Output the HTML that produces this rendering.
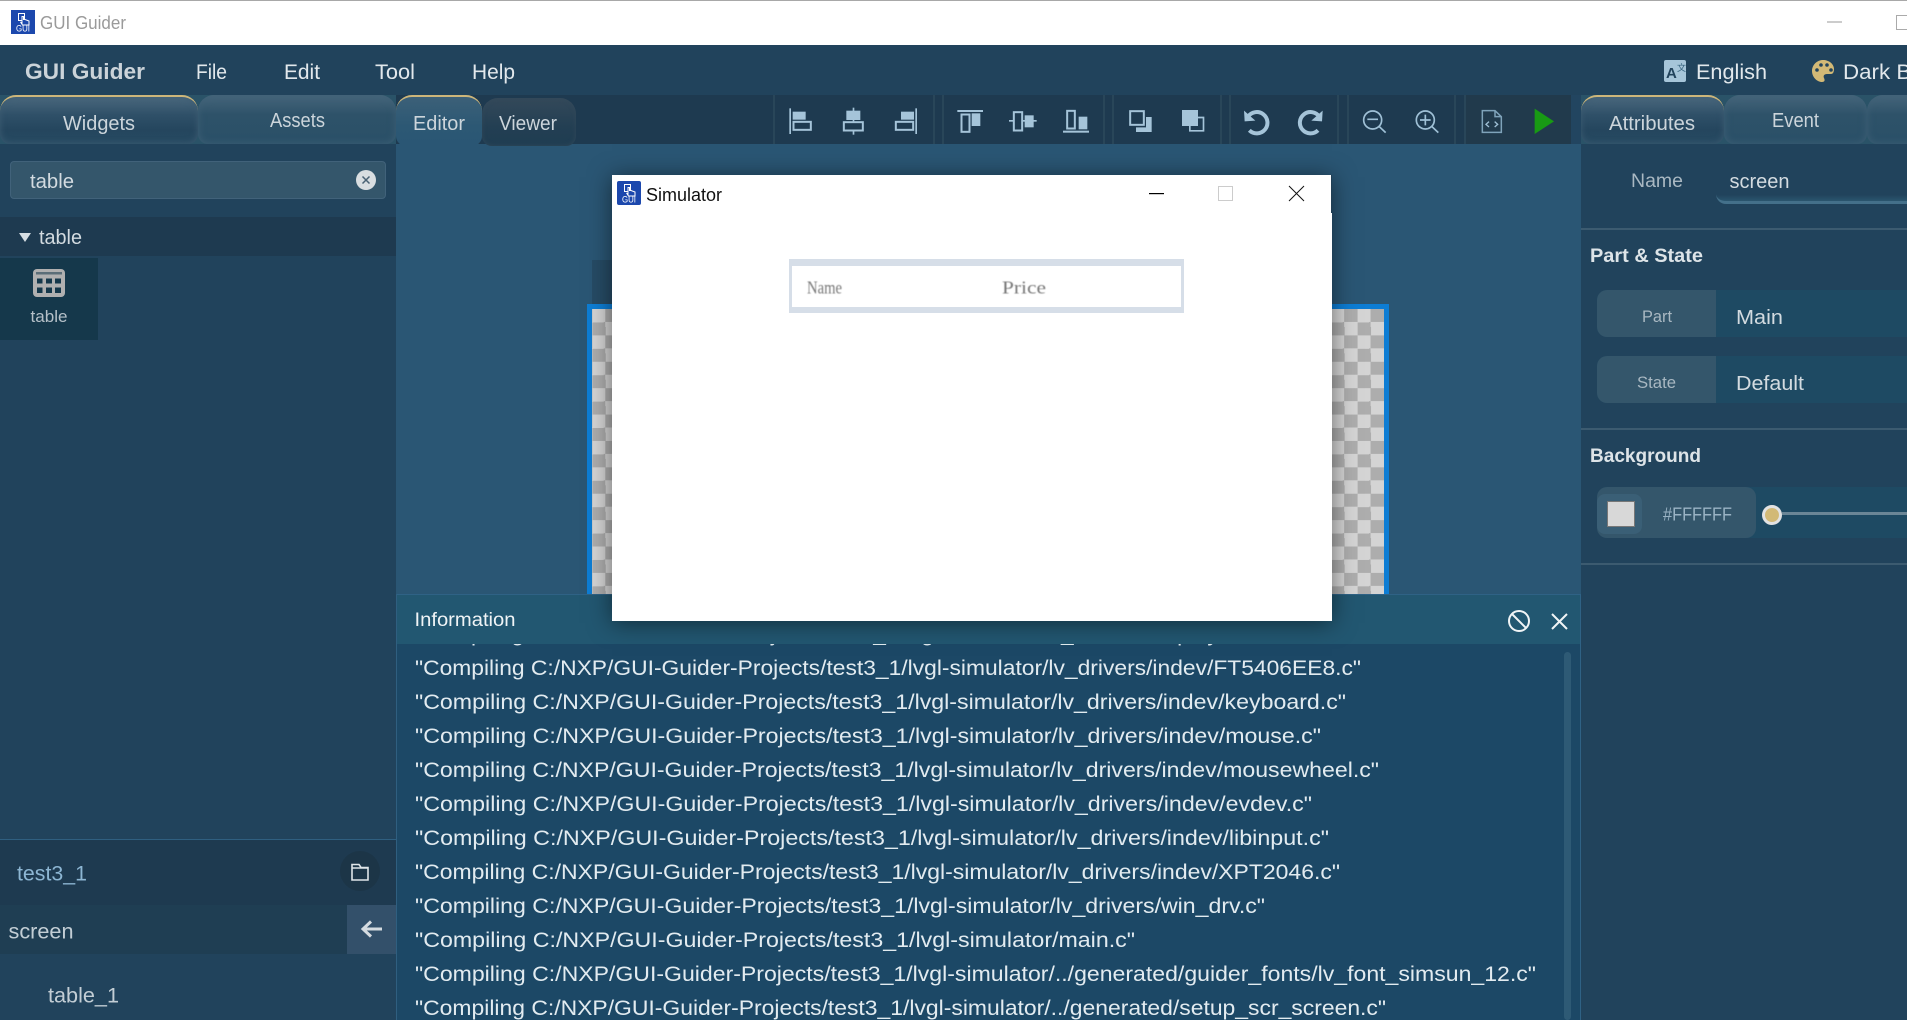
<!DOCTYPE html>
<html lang="en">
<head>
<meta charset="utf-8">
<title>GUI Guider</title>
<style>
html,body{margin:0;padding:0;width:1907px;height:1020px;overflow:hidden;background:#21435c}
.b{position:absolute}
svg{position:absolute;left:0;top:0}
text{font-family:"Liberation Sans",sans-serif}
.tab{position:absolute;box-sizing:border-box;border-radius:16px 16px 10px 10px}
.on{border-top:2px solid #cdb67a;background:linear-gradient(#4a687d 0,#2f5068 38%,#25465e 70%,#264a62 100%);box-shadow:inset 0 0 7px #3e5d73}
.off{background:linear-gradient(#46667b 0,#2e5269 40%,#2a5068 100%);box-shadow:inset 0 0 8px #3f6076}
.s{position:absolute;top:95px;width:2px;height:49px;background:#294659}
</style>
</head>
<body>
<!-- title bar -->
<div class="b" style="left:0;top:0;width:1907px;height:45px;background:#fff;border-top:1px solid #a8a8a8;box-sizing:border-box"></div>
<!-- header -->
<div class="b" style="left:0;top:45px;width:1907px;height:50px;background:#21435c"></div>
<!-- left panel -->
<div class="b" style="left:0;top:95px;width:396px;height:49px;background:#2a5368"></div>
<div class="b" style="left:0;top:144px;width:396px;height:876px;background:#21435c"></div>
<!-- canvas -->
<div class="b" style="left:396px;top:144px;width:1185px;height:876px;background:#2a5674"></div>
<div class="b" style="left:592px;top:260px;width:740px;height:50px;background:#264b65"></div>
<div class="b" style="left:587px;top:304px;width:802px;height:295px;background:#0d7dd4"></div>
<div class="b" style="left:592px;top:309px;width:792px;height:290px;background:conic-gradient(#adadad 25%,#d4d4d4 0 50%,#adadad 0 75%,#d4d4d4 0) right top/26.4px 26.4px"></div>
<!-- toolbar -->
<div class="b" style="left:396px;top:95px;width:1175px;height:49px;background:#1e3a50"></div>
<div class="b" style="left:1571px;top:95px;width:10px;height:49px;background:#224560"></div>
<div class="b" style="left:1465px;top:95px;width:106px;height:49px;background:#213a4c"></div>
<div class="s" style="left:773px"></div>
<div class="s" style="left:933px"></div>
<div class="s" style="left:942px"></div>
<div class="s" style="left:1103px"></div>
<div class="s" style="left:1112px"></div>
<div class="s" style="left:1220px"></div>
<div class="s" style="left:1229px"></div>
<div class="s" style="left:1337px"></div>
<div class="s" style="left:1347px"></div>
<div class="s" style="left:1454px"></div>
<div class="s" style="left:1464px"></div>
<!-- tabs -->
<div class="tab on" style="left:0;top:95px;width:198px;height:49px"></div>
<div class="tab off" style="left:198px;top:95px;width:198px;height:49px"></div>
<div class="tab on" style="left:396px;top:95px;width:86px;height:51px;background:linear-gradient(#3c6078,#2c5874 60%,#2a5674);box-shadow:none"></div>
<div class="tab" style="left:482px;top:98px;width:94px;height:48px;background:linear-gradient(#34495a,#233f53 60%,#1f3d52);box-shadow:inset 0 0 5px #32495a"></div>
<!-- search and widget list -->
<div class="b" style="left:10px;top:161px;width:376px;height:38px;box-sizing:border-box;background:#34566b;border:1px solid #41627a;border-radius:4px"></div>
<div class="b" style="left:0;top:217px;width:396px;height:39px;background:#1e3a50"></div>
<div class="b" style="left:0;top:258px;width:98px;height:82px;background:#15384b"></div>
<!-- bottom-left -->
<div class="b" style="left:0;top:839px;width:396px;height:1px;background:#2f5f80"></div>
<div class="b" style="left:0;top:840px;width:396px;height:65px;background:#1e3a50"></div>
<div class="b" style="left:340px;top:851px;width:40px;height:40px;border-radius:50%;background:#1c3547"></div>
<div class="b" style="left:0;top:905px;width:347px;height:49px;background:#1f3e53"></div>
<div class="b" style="left:347px;top:905px;width:49px;height:49px;background:#33506a"></div>
<div class="b" style="left:396px;top:594px;width:1px;height:426px;background:#2f5f80"></div>
<!-- right panel -->
<div class="b" style="left:1581px;top:95px;width:326px;height:49px;background:#2a5368"></div>
<div class="b" style="left:1581px;top:144px;width:326px;height:876px;background:#21435c"></div>
<div class="tab on" style="left:1581px;top:95px;width:143px;height:49px"></div>
<div class="tab off" style="left:1724px;top:95px;width:143px;height:49px"></div>
<div class="tab off" style="left:1867px;top:95px;width:143px;height:49px"></div>
<div class="b" style="left:1716px;top:160px;width:191px;height:44px;box-sizing:border-box;border-bottom:3px solid #44708a;border-radius:0 0 0 10px;background:linear-gradient(#21435c 85%,#2a566f)"></div>
<div class="b" style="left:1581px;top:228px;width:326px;height:2px;background:#3c5b70"></div>
<div class="b" style="left:1597px;top:290px;width:310px;height:47px;background:#1e4a63;border-radius:10px 0 0 10px"></div>
<div class="b" style="left:1597px;top:290px;width:119px;height:47px;background:#34566b;border-radius:10px 0 0 10px"></div>
<div class="b" style="left:1597px;top:356px;width:310px;height:47px;background:#1e4a63;border-radius:10px 0 0 10px"></div>
<div class="b" style="left:1597px;top:356px;width:119px;height:47px;background:#34566b;border-radius:10px 0 0 10px"></div>
<div class="b" style="left:1581px;top:428px;width:326px;height:2px;background:#3c5b70"></div>
<div class="b" style="left:1597px;top:487px;width:310px;height:51px;background:#1e4a63;border-radius:10px 0 0 10px"></div>
<div class="b" style="left:1597px;top:487px;width:159px;height:51px;background:#34566b;border-radius:10px"></div>
<div class="b" style="left:1597px;top:494px;width:45px;height:40px;background:#3a5f76;border-radius:8px"></div>
<div class="b" style="left:1607px;top:501px;width:28px;height:26px;box-sizing:border-box;background:#d8d8d8;border:1px solid #777"></div>
<div class="b" style="left:1782px;top:512px;width:125px;height:3px;background:#6b8696"></div>
<div class="b" style="left:1762px;top:505px;width:20px;height:20px;box-sizing:border-box;border-radius:50%;background:#d2b976;border:3px solid #e2e2e2"></div>
<div class="b" style="left:1581px;top:563px;width:326px;height:2px;background:#3c5b70"></div>
<!-- info panel -->
<div class="b" style="left:397px;top:594px;width:1184px;height:50px;box-sizing:border-box;background:#225771;border-top:1px solid #2f6285;border-right:1px solid #2f6285"></div>
<div class="b" style="left:397px;top:644px;width:1184px;height:376px;box-sizing:border-box;background:#1c4866;border-right:1px solid #2f6285"></div>
<div class="b" style="left:1564px;top:652px;width:7px;height:368px;background:#2e5a75;border-radius:4px"></div>

<svg width="1907" height="1020" viewBox="0 0 1907 1020">
<!-- log text (behind window) -->
<clipPath id="logclip"><rect x="397" y="644" width="1160" height="376"/></clipPath>
<g font-size="21" fill="#e2ebf0" clip-path="url(#logclip)">
<text x="415" y="641" textLength="810" lengthAdjust="spacingAndGlyphs">"Compiling C:/NXP/GUI-Guider-Projects/test3_1/lvgl-simulator/lv_drivers/display/</text>
<text x="415" y="675" textLength="946" lengthAdjust="spacingAndGlyphs">"Compiling C:/NXP/GUI-Guider-Projects/test3_1/lvgl-simulator/lv_drivers/indev/FT5406EE8.c"</text>
<text x="415" y="709" textLength="931" lengthAdjust="spacingAndGlyphs">"Compiling C:/NXP/GUI-Guider-Projects/test3_1/lvgl-simulator/lv_drivers/indev/keyboard.c"</text>
<text x="415" y="743" textLength="906" lengthAdjust="spacingAndGlyphs">"Compiling C:/NXP/GUI-Guider-Projects/test3_1/lvgl-simulator/lv_drivers/indev/mouse.c"</text>
<text x="415" y="777" textLength="964" lengthAdjust="spacingAndGlyphs">"Compiling C:/NXP/GUI-Guider-Projects/test3_1/lvgl-simulator/lv_drivers/indev/mousewheel.c"</text>
<text x="415" y="811" textLength="897" lengthAdjust="spacingAndGlyphs">"Compiling C:/NXP/GUI-Guider-Projects/test3_1/lvgl-simulator/lv_drivers/indev/evdev.c"</text>
<text x="415" y="845" textLength="914" lengthAdjust="spacingAndGlyphs">"Compiling C:/NXP/GUI-Guider-Projects/test3_1/lvgl-simulator/lv_drivers/indev/libinput.c"</text>
<text x="415" y="879" textLength="925" lengthAdjust="spacingAndGlyphs">"Compiling C:/NXP/GUI-Guider-Projects/test3_1/lvgl-simulator/lv_drivers/indev/XPT2046.c"</text>
<text x="415" y="913" textLength="850" lengthAdjust="spacingAndGlyphs">"Compiling C:/NXP/GUI-Guider-Projects/test3_1/lvgl-simulator/lv_drivers/win_drv.c"</text>
<text x="415" y="947" textLength="720" lengthAdjust="spacingAndGlyphs">"Compiling C:/NXP/GUI-Guider-Projects/test3_1/lvgl-simulator/main.c"</text>
<text x="415" y="981" textLength="1121" lengthAdjust="spacingAndGlyphs">"Compiling C:/NXP/GUI-Guider-Projects/test3_1/lvgl-simulator/../generated/guider_fonts/lv_font_simsun_12.c"</text>
<text x="415" y="1015" textLength="971" lengthAdjust="spacingAndGlyphs">"Compiling C:/NXP/GUI-Guider-Projects/test3_1/lvgl-simulator/../generated/setup_scr_screen.c"</text>
</g>
<text x="414.500" y="626" font-size="19" fill="#f0f4f6" textLength="101" lengthAdjust="spacingAndGlyphs">Information</text>
<circle cx="1519" cy="621" r="10" fill="none" stroke="#f0f4f6" stroke-width="2"/>
<path d="M1512 614L1526 628" stroke="#f0f4f6" stroke-width="2"/>
<path d="M1552 614L1567 629M1567 614L1552 629" stroke="#f0f4f6" stroke-width="2"/>

<!-- title bar -->
<rect x="11" y="10" width="24" height="24" fill="#1c48ad"/>
<g stroke="#fff" fill="none" stroke-width="1"><rect x="18.500" y="13.500" width="6" height="7"/><path d="M22 16.500v6.500l-1.500-1 2 3h6.500v-4l-4-1.500h-1.500v-3z" fill="#1c48ad"/></g>
<text x="16" y="31.500" font-size="9" fill="#fff" textLength="14" lengthAdjust="spacingAndGlyphs">GUI</text>
<text x="40" y="29" font-size="18" fill="#9a9a9a" textLength="86" lengthAdjust="spacingAndGlyphs">GUI Guider</text>
<rect x="1827" y="21.500" width="15" height="1" fill="#999"/>
<rect x="1896.500" y="15.500" width="14" height="14" fill="none" stroke="#aaa"/>

<!-- header text -->
<text x="25" y="79" font-size="22" font-weight="bold" fill="#cbd3d9" textLength="120" lengthAdjust="spacingAndGlyphs">GUI Guider</text>
<g font-size="21" fill="#e2e8ec">
<text x="196" y="79" textLength="31" lengthAdjust="spacingAndGlyphs">File</text>
<text x="284" y="79" textLength="36" lengthAdjust="spacingAndGlyphs">Edit</text>
<text x="375" y="79" textLength="40" lengthAdjust="spacingAndGlyphs">Tool</text>
<text x="472" y="79" textLength="43" lengthAdjust="spacingAndGlyphs">Help</text>
<text x="1696" y="79" textLength="71" lengthAdjust="spacingAndGlyphs">English</text>
<text x="1843" y="79" textLength="98" lengthAdjust="spacingAndGlyphs">Dark Blue</text>
</g>
<rect x="1664" y="60" width="22" height="22" rx="2" fill="#a6c5d9"/>
<text x="1666" y="78" font-size="15" font-weight="bold" fill="#21435c">A</text>
<text x="1677" y="71" font-size="9" fill="#33607c" style="font-family:'Liberation Sans','Noto Sans CJK SC',sans-serif">文</text>
<path d="M1823 60c-6 0-11 5-11 11s5 11 10 11c3 0 3-2 2-4s0-4 3-4h4c2 0 3-2 3-5 0-5-5-9-11-9z" fill="#d2b976"/>
<g fill="#21435c"><circle cx="1817" cy="70" r="1.800"/><circle cx="1821" cy="65" r="1.800"/><circle cx="1827" cy="65" r="1.800"/><circle cx="1831" cy="70" r="1.800"/></g>

<!-- tab text -->
<g font-size="20" fill="#ccd5db">
<text x="63" y="130" textLength="72" lengthAdjust="spacingAndGlyphs">Widgets</text>
<text x="270" y="127" textLength="55" lengthAdjust="spacingAndGlyphs">Assets</text>
<text x="413" y="130" textLength="52" lengthAdjust="spacingAndGlyphs">Editor</text>
<text x="499" y="130" textLength="58" lengthAdjust="spacingAndGlyphs">Viewer</text>
<text x="1609" y="130" textLength="86" lengthAdjust="spacingAndGlyphs">Attributes</text>
<text x="1772" y="127" textLength="47" lengthAdjust="spacingAndGlyphs">Event</text>
</g>

<!-- left panel text -->
<text x="30" y="188" font-size="20" fill="#d3dbe0" textLength="44" lengthAdjust="spacingAndGlyphs">table</text>
<circle cx="366" cy="180" r="10" fill="#d9dee1"/>
<path d="M362.500 176.500l7 7M369.500 176.500l-7 7" stroke="#4a6274" stroke-width="1.500"/>
<path d="M19 233h12l-6 9z" fill="#d5dde2"/>
<text x="39" y="244" font-size="20" fill="#d3dbe0" textLength="43" lengthAdjust="spacingAndGlyphs">table</text>
<rect x="33" y="269" width="32" height="28" rx="4" fill="#b0b0b0"/>
<g fill="#15384b"><rect x="36" y="272" width="26" height="2.500" opacity=".55"/><rect x="37" y="278.500" width="5.500" height="5"/><rect x="46" y="278.500" width="6" height="5"/><rect x="55" y="278.500" width="6" height="5"/><rect x="37" y="287.500" width="5.500" height="5.500"/><rect x="46" y="287.500" width="6" height="5.500"/><rect x="55" y="287.500" width="6" height="5.500"/></g>
<text x="30.500" y="322" font-size="17" fill="#b5c0c8" textLength="37" lengthAdjust="spacingAndGlyphs">table</text>
<text x="17" y="880.500" font-size="21" fill="#8db6d3" textLength="70" lengthAdjust="spacingAndGlyphs">test3_1</text>
<path d="M352 880v-15.500h7l2 3h7V880zM352 868h16" fill="none" stroke="#dfe5e8" stroke-width="1.600"/>
<text x="8.500" y="938.500" font-size="21" fill="#c3ced5" textLength="65" lengthAdjust="spacingAndGlyphs">screen</text>
<path d="M382 929H364M371 921.500l-8 7.500 8 7.500" fill="none" stroke="#d5dbe0" stroke-width="3"/>
<text x="48" y="1002.500" font-size="21" fill="#c3ced5" textLength="71" lengthAdjust="spacingAndGlyphs">table_1</text>

<!-- right panel text -->
<text x="1631" y="187" font-size="19" fill="#a9b8c2" textLength="52" lengthAdjust="spacingAndGlyphs">Name</text>
<text x="1729.500" y="188" font-size="20" fill="#d3dbe0" textLength="60" lengthAdjust="spacingAndGlyphs">screen</text>
<text x="1590" y="262" font-size="19" font-weight="bold" fill="#dde4e8" textLength="113" lengthAdjust="spacingAndGlyphs">Part &amp; State</text>
<text x="1642" y="322" font-size="17" fill="#a9b8c2" textLength="30" lengthAdjust="spacingAndGlyphs">Part</text>
<text x="1736" y="324" font-size="20" fill="#d3dbe0" textLength="47" lengthAdjust="spacingAndGlyphs">Main</text>
<text x="1637" y="388" font-size="17" fill="#a9b8c2" textLength="39" lengthAdjust="spacingAndGlyphs">State</text>
<text x="1736" y="390" font-size="20" fill="#d3dbe0" textLength="68" lengthAdjust="spacingAndGlyphs">Default</text>
<text x="1590" y="462" font-size="19" font-weight="bold" fill="#dde4e8" textLength="111" lengthAdjust="spacingAndGlyphs">Background</text>
<text x="1663" y="520.500" font-size="18" fill="#9ab3c4" textLength="69" lengthAdjust="spacingAndGlyphs">#FFFFFF</text>

<!-- toolbar icons, first group in 3x coordinates -->
<g transform="translate(770 90) scale(.33333)" fill="#a5c4d9" stroke="none">
<rect x="58" y="55" width="5" height="77"/><rect x="68" y="65" width="39" height="24"/><rect x="70.500" y="95.500" width="52" height="24" fill="none" stroke="#a5c4d9" stroke-width="6"/>
<rect x="248" y="53" width="5" height="81"/><rect x="229" y="62" width="42" height="28"/><rect x="221.500" y="96.500" width="57" height="25" fill="#1e3a50" stroke="#a5c4d9" stroke-width="6"/>
<rect x="436" y="55" width="5" height="77"/><rect x="393" y="65" width="39" height="24"/><rect x="377.500" y="95.500" width="52" height="24" fill="none" stroke="#a5c4d9" stroke-width="6"/>
<rect x="562" y="60" width="77" height="6"/><rect x="574.500" y="73.500" width="24" height="52" fill="none" stroke="#a5c4d9" stroke-width="6"/><rect x="605" y="70" width="26" height="38"/>
<rect x="717" y="90" width="83" height="5"/><rect x="731.500" y="66.500" width="25" height="55" fill="#1e3a50" stroke="#a5c4d9" stroke-width="6"/><rect x="764" y="76" width="27" height="36"/>
<rect x="879" y="122" width="78" height="6"/><rect x="891.500" y="62.500" width="23" height="53" fill="none" stroke="#a5c4d9" stroke-width="6"/><rect x="926" y="80" width="26" height="38"/>
<rect x="1080.500" y="63.500" width="41" height="41" fill="none" stroke="#a5c4d9" stroke-width="6"/><path d="M1128 81h17v45h-47v-14h30z"/>
</g>
<g transform="translate(1170 90) scale(.33333)">
<rect x="36" y="60" width="48" height="48" fill="#a5c4d9"/>
<path d="M84 82.500h16.500v40H59.500V108" fill="none" stroke="#a5c4d9" stroke-width="5"/>
<path d="M238 121A32 32 0 1 0 234 80" fill="none" stroke="#a5c4d9" stroke-width="12"/>
<path d="M222 62L224 94L256 92Z" fill="#a5c4d9"/>
<path d="M444 121A32 32 0 1 1 448 80" fill="none" stroke="#a5c4d9" stroke-width="12"/>
<path d="M458 62L456 94L424 92Z" fill="#a5c4d9"/>
<g fill="none" stroke="#9fc0d6" stroke-width="5"><circle cx="608" cy="90" r="27"/><path d="M628 110L647 128M592 88H624"/><circle cx="766" cy="90" r="27"/><path d="M786 110L805 128M750 90H782M766 74V106"/></g>
<path d="M937 62H975L994 80V127H937Z M975 62V80H994" fill="none" stroke="#7fa3ba" stroke-width="4.500"/>
<path d="M957 95L948 103L957 111M974 95L983 103L974 111" fill="none" stroke="#9fc0d6" stroke-width="4"/>
<path d="M1094 56L1152 94L1094 132Z" fill="#189a14"/>
</g>
</svg>

<!-- simulator window -->
<div class="b" style="left:612px;top:175px;width:720px;height:446px;background:#fff;box-shadow:0 2px 22px rgba(0,0,0,.5)"></div>
<div class="b" style="left:1331px;top:175px;width:1px;height:38px;background:#213f55"></div>
<div class="b" style="left:789px;top:259px;width:395px;height:54px;box-sizing:border-box;background:#fff;border:solid #d6dee8;border-width:7px 3px 6px 3px"></div>
<svg width="1907" height="1020" viewBox="0 0 1907 1020">
<rect x="617" y="181" width="24" height="24" rx="2" fill="#1c48ad"/>
<g stroke="#fff" fill="none" stroke-width="1"><rect x="624.500" y="184.500" width="6" height="7"/><path d="M628 187.500v6.500l-1.500-1 2 3h6.500v-4l-4-1.500h-1.500v-3z" fill="#1c48ad"/></g>
<text x="622" y="202.500" font-size="9" fill="#fff" textLength="14" lengthAdjust="spacingAndGlyphs">GUI</text>
<text x="646" y="201" font-size="18" fill="#111" textLength="76" lengthAdjust="spacingAndGlyphs">Simulator</text>
<rect x="1149" y="193" width="15" height="1.200" fill="#000"/>
<rect x="1218.500" y="186.500" width="14" height="14" fill="none" stroke="#ccc"/>
<path d="M1289 186L1304 201M1304 186L1289 201" stroke="#111" stroke-width="1"/>
<g font-size="18" fill="#777" style="filter:blur(.4px)">
<text x="807" y="293.500" textLength="35" lengthAdjust="spacingAndGlyphs" style="font-family:'Liberation Serif',serif">Name</text>
<text x="1002" y="293.500" textLength="44" lengthAdjust="spacingAndGlyphs" style="font-family:'Liberation Serif',serif">Price</text>
</g>
</svg>
</body>
</html>
